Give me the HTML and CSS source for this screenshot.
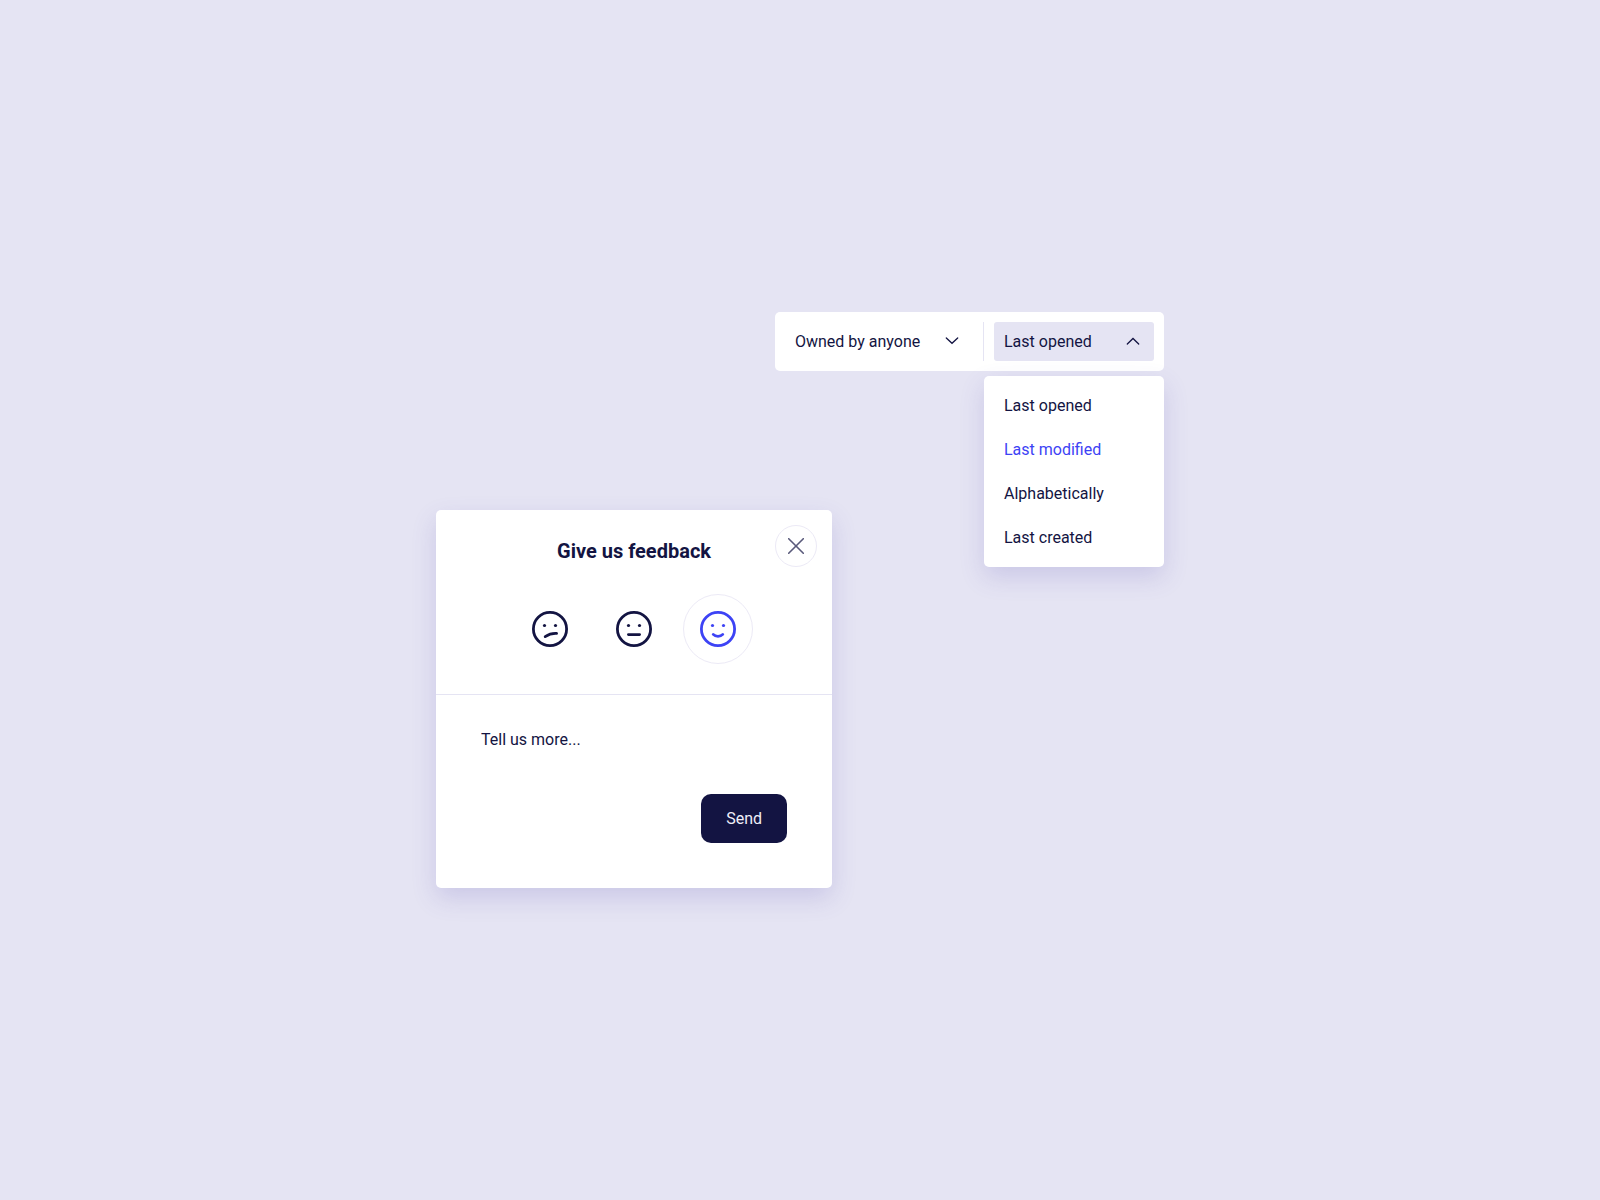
FILE: index.html
```html
<!DOCTYPE html>
<html lang="en">
<head>
<meta charset="utf-8">
<meta name="viewport" content="width=device-width, initial-scale=1">
<title>Feedback</title>
<link rel="stylesheet" href="styles.css">
</head>
<body>
<main class="stage">
  <div class="filters">
    <div class="filter">
      <select class="filter-select" aria-label="Owner">
        <option>Owned by anyone</option>
        <option>Owned by me</option>
      </select>
      <svg class="chevron" viewBox="0 0 12 9" aria-hidden="true"><path d="M0.3 1 6 6.3 11.7 1"/></svg>
    </div>
    <div class="filter filter-open">
      <select class="filter-select" aria-label="Sort by">
        <option>Last opened</option>
        <option>Last modified</option>
        <option>Alphabetically</option>
        <option>Last created</option>
      </select>
      <svg class="chevron" viewBox="0 0 12 9" aria-hidden="true"><path d="M0.3 7 6 1.5 11.7 7"/></svg>
    </div>
    <div class="menu">
      <button class="menu-item" type="button">Last opened</button>
      <button class="menu-item menu-item-active" type="button">Last modified</button>
      <button class="menu-item" type="button">Alphabetically</button>
      <button class="menu-item" type="button">Last created</button>
    </div>
  </div>

  <form class="feedback">
    <div class="feedback-head">
      <h1 class="feedback-title">Give us feedback</h1>
      <div class="faces" role="radiogroup" aria-label="Rating">
        <label class="face">
          <input class="face-input" type="radio" name="rating" value="bad" aria-label="Unhappy">
          <svg class="face-icon" viewBox="0 0 36 36" aria-hidden="true"><circle cx="18" cy="18" r="16.6"/><path d="M13.2 25.6Q18.5 22 24.6 22.4"/><circle class="eye" cx="12.5" cy="14.5" r="1.6"/><circle class="eye" cx="23.5" cy="14.5" r="1.6"/></svg>
        </label>
        <label class="face">
          <input class="face-input" type="radio" name="rating" value="ok" aria-label="Neutral">
          <svg class="face-icon" viewBox="0 0 36 36" aria-hidden="true"><circle cx="18" cy="18" r="16.6"/><path d="M12.4 23.6H23.6"/><circle class="eye" cx="12.5" cy="14.5" r="1.6"/><circle class="eye" cx="23.5" cy="14.5" r="1.6"/></svg>
        </label>
        <label class="face">
          <input class="face-input" type="radio" name="rating" value="good" aria-label="Happy" checked>
          <svg class="face-icon" viewBox="0 0 36 36" aria-hidden="true"><circle cx="18" cy="18" r="16.6"/><path d="M13.2 23.4C15.6 25.9 20.4 25.9 22.8 23.4"/><circle class="eye" cx="12.5" cy="14.5" r="1.6"/><circle class="eye" cx="23.5" cy="14.5" r="1.6"/></svg>
        </label>
      </div>
      <button class="close" type="button" aria-label="Close">
        <svg class="close-icon" viewBox="0 0 16 16" aria-hidden="true"><path d="M0.7 0.7 15.3 15.3M15.3 0.7 0.7 15.3"/></svg>
      </button>
    </div>
    <div class="feedback-body">
      <textarea class="message" rows="1" aria-label="Message" placeholder="Tell us more..."></textarea>
      <button class="send" type="button">Send</button>
    </div>
  </form>
</main>
</body>
</html>
```
FILE: styles.css
```css
:root {
  --bg: #e5e4f3;
  --navy: #131442;
  --blue: #3d43f5;
  --shadow: 0 10px 24px rgba(92, 78, 180, 0.19);
}

* {
  box-sizing: border-box;
}

body {
  display: flex;
  align-items: center;
  justify-content: center;
  min-height: 100vh;
  margin: 0;
  background: var(--bg);
  color: var(--navy);
  font: 16px/19px Roboto, "Liberation Sans", sans-serif;
}

button,
select,
textarea {
  margin: 0;
  padding: 0;
  border: 0;
  background: none;
  color: inherit;
  font: inherit;
}

.stage {
  display: flex;
  flex-direction: column;
  gap: 139px;
  width: 100%;
  max-width: 728px;
}

.filters {
  position: relative;
  display: flex;
  align-self: flex-end;
  gap: 10px;
  padding: 10px;
  border-radius: 5px;
  background: #fff;
}

.filter {
  display: grid;
  align-items: center;
  width: 188px;
}

.filter-open {
  width: 171px;
  padding-left: 10px;
  border-left: 1px solid var(--bg);
}

.filter-select {
  grid-area: 1 / 1;
  width: 100%;
  padding: 10px;
  border-radius: 3px;
  appearance: none;
}

.filter-open .filter-select {
  background: var(--bg);
}

.chevron {
  grid-area: 1 / 1;
  justify-self: end;
  width: 12px;
  height: 9px;
  margin-right: 15px;
  overflow: visible;
  fill: none;
  stroke: var(--navy);
  stroke-width: 1.3;
  stroke-linecap: round;
  pointer-events: none;
}

.menu {
  position: absolute;
  top: calc(100% + 5px);
  right: 0;
  display: flex;
  flex-direction: column;
  gap: 25px;
  width: 180px;
  padding: 20px;
  border-radius: 5px;
  background: #fff;
  box-shadow: var(--shadow);
}

.menu-item {
  text-align: left;
}

.menu-item-active {
  color: var(--blue);
}

.feedback {
  width: 396px;
  max-width: 100%;
  border-radius: 5px;
  background: #fff;
  box-shadow: var(--shadow);
}

.feedback-head {
  position: relative;
  display: flex;
  flex-direction: column;
  align-items: center;
  gap: 32px;
  padding: 30px;
  border-bottom: 1px solid var(--bg);
}

.feedback-title {
  margin: 0;
  font-size: 20px;
  font-weight: 700;
  line-height: 22px;
}

.faces {
  display: flex;
  gap: 14px;
}

.face {
  position: relative;
  display: grid;
  place-items: center;
  width: 70px;
  height: 70px;
  border: 1px solid transparent;
  border-radius: 50%;
}

.face:has(:checked) {
  border-color: #eceaf6;
  color: var(--blue);
}

.face-input {
  position: absolute;
  inset: 0;
  width: 100%;
  height: 100%;
  margin: 0;
  opacity: 0;
}

.face-icon {
  width: 36px;
  height: 36px;
  fill: none;
  stroke: currentColor;
  stroke-width: 2.8;
  stroke-linecap: round;
}

.eye {
  fill: currentColor;
  stroke: none;
}

.close {
  position: absolute;
  top: 15px;
  right: 15px;
  display: grid;
  place-items: center;
  width: 42px;
  height: 42px;
  border: 1px solid #eceaf6;
  border-radius: 50%;
}

.close-icon {
  width: 16px;
  height: 16px;
  fill: none;
  stroke: #5a5a7b;
  stroke-width: 1.6;
  stroke-linecap: round;
}

.feedback-body {
  display: flex;
  flex-direction: column;
  gap: 45px;
  padding: 35px 45px 45px;
}

.message {
  display: block;
  width: 100%;
  height: 19px;
  outline: 0;
  overflow: hidden;
  resize: none;
}

.message::placeholder {
  color: var(--navy);
  opacity: 1;
}

.send {
  align-self: flex-end;
  padding: 15px 25px;
  border-radius: 10px;
  background: var(--navy);
  color: #efeef8;
}
```
